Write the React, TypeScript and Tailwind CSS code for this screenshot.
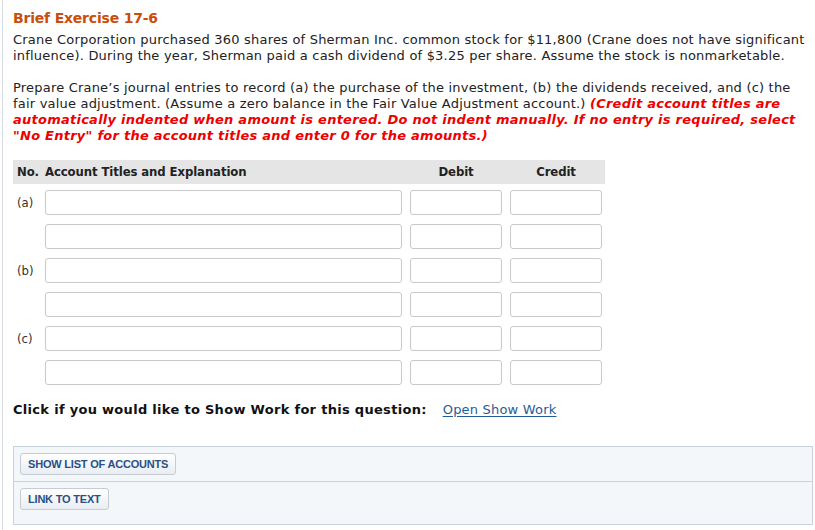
const rows = [
  { label: '(a)' },
  { label: '' },
  { label: '(b)' },
  { label: '' },
  { label: '(c)' },
  { label: '' },
];

function AccountButton({ children }: { children: React.ReactNode }) {
  return (
    <button className="h-[22px] px-[7px] rounded-[3px] border border-[#c5ccd6] bg-gradient-to-b from-white to-[#e9edf2] text-[11px] font-bold text-[#2a4f86] font-['Liberation_Sans',Arial,sans-serif] tracking-[-0.2px]">
      {children}
    </button>
  );
}

export default function App() {
  return (
    <div className="min-h-screen bg-white ml-[2px] border-l border-[#d6dbe3] pl-[10px] pr-[3px] pt-[9px] text-[13px] leading-[16px] text-[#222] font-['DejaVu_Sans',Verdana,sans-serif]">
      {/* Title */}
      <h2 className="text-[14px] leading-[18px] font-bold text-[#c94e0c] tracking-[-0.2px]">Brief Exercise 17-6</h2>

      {/* Problem text */}
      <p className="mt-[5px] pr-[4px] tracking-[0.2px]">
        Crane Corporation purchased 360 shares of Sherman Inc. common stock for $11,800 (Crane does not have significant
        influence). During the year, Sherman paid a cash dividend of $3.25 per share. Assume the stock is nonmarketable.
      </p>
      <p className="mt-[16px] pr-[4px] tracking-[0.2px]">
        Prepare Crane’s journal entries to record (a) the purchase of the investment, (b) the dividends received, and (c) the
        fair value adjustment. (Assume a zero balance in the Fair Value Adjustment account.){' '}
        <span className="font-bold italic text-[#ee0000] tracking-[0.25px]">
          (Credit account titles are automatically indented when amount is entered. Do not indent manually. If no entry is
          required, select "No Entry" for the account titles and enter 0 for the amounts.)
        </span>
      </p>

      {/* Journal table */}
      <div className="mt-[16px] w-[592px] font-['DejaVu_Sans_Condensed','DejaVu_Sans',Tahoma,sans-serif]">
        <div className="flex items-center h-[24px] bg-[#e5e5e5] font-bold text-[#222] tracking-[-0.1px]">
          <div className="w-[32px] pl-[4px]">No.</div>
          <div className="w-[365px]">Account Titles and Explanation</div>
          <div className="w-[92px] text-center">Debit</div>
          <div className="w-[8px]" />
          <div className="w-[92px] text-center">Credit</div>
        </div>
        <div className="flex flex-col gap-[9px] mt-[6px]">
          {rows.map((row, i) => (
            <div key={i} className="flex items-center">
              <div className="w-[32px] pl-[4px] text-[#333]">{row.label}</div>
              <input className="w-[357px] h-[25px] rounded-[3px] border border-[#c9c9c9] bg-white" />
              <input className="ml-[8px] w-[92px] h-[25px] rounded-[3px] border border-[#c9c9c9] bg-white" />
              <input className="ml-[8px] w-[92px] h-[25px] rounded-[3px] border border-[#c9c9c9] bg-white" />
            </div>
          ))}
        </div>
      </div>

      {/* Show work */}
      <div className="mt-[17px] flex items-center">
        <span className="font-bold text-[#111] tracking-[0.3px]">Click if you would like to Show Work for this question:</span>
        <a href="#" className="ml-[16px] text-[#1f5c99] underline underline-offset-2 tracking-[0.2px]">
          Open Show Work
        </a>
      </div>

      {/* Tools box */}
      <div className="mt-[28px] w-[800px] border border-[#c9d1dd] bg-[#f4f7fa]">
        <div className="px-[6px] py-[6px] border-b border-[#c9d1dd]">
          <AccountButton>SHOW LIST OF ACCOUNTS</AccountButton>
        </div>
        <div className="px-[6px] pt-[6px] pb-[14px]">
          <AccountButton>LINK TO TEXT</AccountButton>
        </div>
      </div>
    </div>
  );
}
